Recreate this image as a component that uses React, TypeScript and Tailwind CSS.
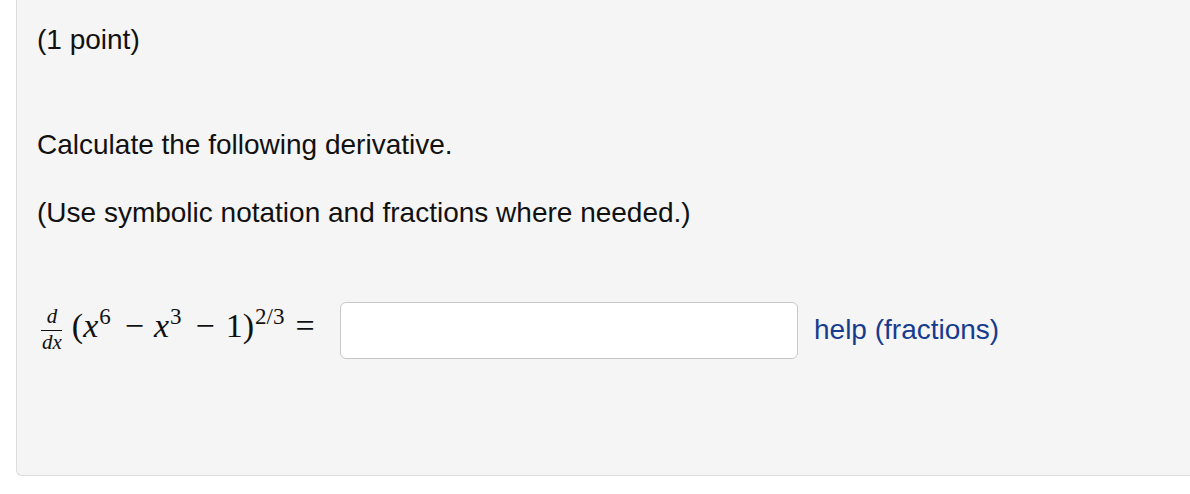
import React from "react";

export default function App() {
  const serif = { fontFamily: '"Liberation Serif", "Times New Roman", serif' };
  return (
    <div className="w-[1190px] h-[494px] overflow-hidden bg-white" style={{ fontFamily: '"Liberation Sans", Arial, Helvetica, sans-serif' }}>
      <div className="ml-[16px] w-[1200px] h-[476px] bg-[#f5f5f5] border-l border-b border-[#dcdcdc] rounded-bl-[6px] pl-[20px] pt-[20px] text-[28px] leading-[40px] text-[#111]">
        <p>(1 point)</p>
        <p className="mt-[65px]">Calculate the following derivative.</p>
        <p className="mt-[28px]">(Use symbolic notation and fractions where needed.)</p>
        <div className="mt-[68px] flex items-center h-[58px]">
          <div className="w-[282px] flex items-baseline whitespace-nowrap text-[34px] leading-[40px] relative top-[6px]" style={serif}>
            <span className="inline-flex flex-col items-center relative -top-[14px] ml-[4px] mr-[9px]">
              <span className="italic text-[21px] leading-[18px] px-[1px]">d</span>
              <span className="block w-[21px] h-[1.5px] bg-[#111] mt-[5px]"></span>
              <span className="italic text-[21px] leading-[20px] px-[1px] mt-[1px]">dx</span>
            </span>
            <span>(</span>
            <span className="italic">x</span>
            <span className="text-[23px] relative -top-[13px] ml-[1px]">6</span>
            <span className="ml-[14px] mr-[10px]">−</span>
            <span className="italic">x</span>
            <span className="text-[23px] relative -top-[13px] ml-[1px]">3</span>
            <span className="ml-[14px] mr-[11px]">−</span>
            <span>1)</span>
            <span className="text-[23px] relative -top-[13px] ml-[1px]">2/3</span>
            <span className="ml-[11px]">=</span>
          </div>
          <input
            type="text"
            className="ml-[21px] w-[458px] h-[57px] bg-white border border-[#c8c8c8] rounded-[6px] outline-none"
          />
          <a className="ml-[16px] text-[#163c8f] text-[28px]" href="#">help (fractions)</a>
        </div>
      </div>
    </div>
  );
}
